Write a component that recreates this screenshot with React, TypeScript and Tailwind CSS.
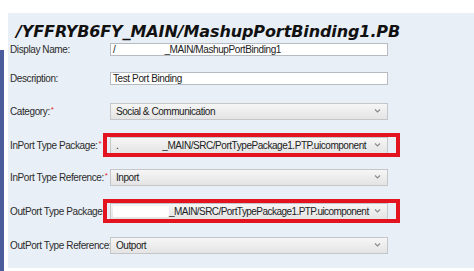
import { ReactNode } from 'react';

// Form rows of the port binding editor (values partly redacted in the source)
interface FieldRow {
  label: string;
  required?: boolean;
  kind: 'input' | 'select';
  value: ReactNode;
  marked?: boolean;
  mt: string;
}

const ROWS: FieldRow[] = [
  {
    label: 'Display Name:',
    kind: 'input',
    value: (
      <>
        <span>/</span>
        <span className="ml-[49px]">_MAIN/MashupPortBinding1</span>
      </>
    ),
    mt: 'mt-0',
  },
  { label: 'Description:', kind: 'input', value: 'Test Port Binding', mt: 'mt-[11px]' },
  { label: 'Category:', required: true, kind: 'select', value: 'Social & Communication', mt: 'mt-[15px]' },
  {
    label: 'InPort Type Package:',
    required: true,
    kind: 'select',
    marked: true,
    value: (
      <>
        <span>.</span>
        <span className="ml-[44px]">_MAIN/SRC/PortTypePackage1.PTP.uicomponent</span>
      </>
    ),
    mt: 'mt-[16px]',
  },
  { label: 'InPort Type Reference:', required: true, kind: 'select', value: 'Inport', mt: 'mt-[14px]' },
  {
    label: 'OutPort Type Package:',
    kind: 'select',
    marked: true,
    value: (
      <>
        <span className="inline-block w-[56px] h-[11px] bg-white -ml-[3px] align-middle" />
        <span className="tracking-[-0.55px]">_MAIN/SRC/PortTypePackage1.PTP.uicomponent</span>
      </>
    ),
    mt: 'mt-[16px]',
  },
  { label: 'OutPort Type Reference:', kind: 'select', value: 'Outport', mt: 'mt-[16px]' },
];

function Chevron() {
  return (
    <svg width="7" height="5" viewBox="0 0 7 5" className="absolute right-[6px] top-1/2 -translate-y-1/2">
      <polyline points="1,1 3.5,3.5 6,1" fill="none" stroke="#8a8a8a" strokeWidth="1.1" />
    </svg>
  );
}

function Field({ row }: { row: FieldRow }) {
  return (
    <div className={`flex items-center h-[18px] ${row.mt}`}>
      <div className="w-[102px] shrink-0 pl-[2px] text-[10px] tracking-[-0.4px] text-[#2b2b2b] whitespace-nowrap">
        {row.label}
        {row.required && <span className="text-[#e0262e] align-top text-[8px] ml-[1px]">*</span>}
      </div>
      <div className="relative">
        {row.kind === 'input' ? (
          <div className="w-[278px] h-[13px] bg-white border border-[#b7bcc2] flex items-center pl-[2px] text-[10px] tracking-[-0.4px] text-[#222] whitespace-nowrap overflow-hidden">
            {row.value}
          </div>
        ) : (
          <div className="relative w-[278px] h-[17px] border border-[#c4c6c9] bg-gradient-to-b from-[#f6f6f6] to-[#e4e4e4] flex items-center pl-[5px] text-[10px] tracking-[-0.45px] text-[#222] whitespace-nowrap overflow-hidden">
            {row.value}
            <Chevron />
          </div>
        )}
        {/* red annotation box drawn over the field */}
        {row.marked && (
          <div className="absolute -left-[7px] -top-[4px] w-[297px] h-[24px] border-[4px] border-[#e3141f] pointer-events-none" />
        )}
      </div>
    </div>
  );
}

export default function App() {
  return (
    <div
      className="w-[474px] h-[271px] bg-white flex overflow-hidden"
      style={{ fontFamily: '"Liberation Sans", Arial, sans-serif' }}
    >
      {/* Left edge strip */}
      <div className="w-[8px] shrink-0 flex flex-col">
        <div className="h-[50px]" />
        <div className="w-[4px] flex-1 bg-[#4a5c9c]" />
      </div>

      {/* Editor panel */}
      <div className="flex-1 mt-[13px] mb-[3px] bg-[#e9eff6] flex flex-col">
        <h1
          className="h-[28px] pl-[8px] pt-[9px] text-[16px] leading-[20px] font-bold italic text-[#111] whitespace-nowrap tracking-[-0.1px]"
          style={{ fontFamily: '"DejaVu Sans", Verdana, sans-serif' }}
        >
          /YFFRYB6FY_MAIN/MashupPortBinding1.PB
        </h1>
        <div className="flex flex-col -mt-[1px]">
          {ROWS.map((row) => (
            <Field key={row.label} row={row} />
          ))}
        </div>
      </div>
    </div>
  );
}
